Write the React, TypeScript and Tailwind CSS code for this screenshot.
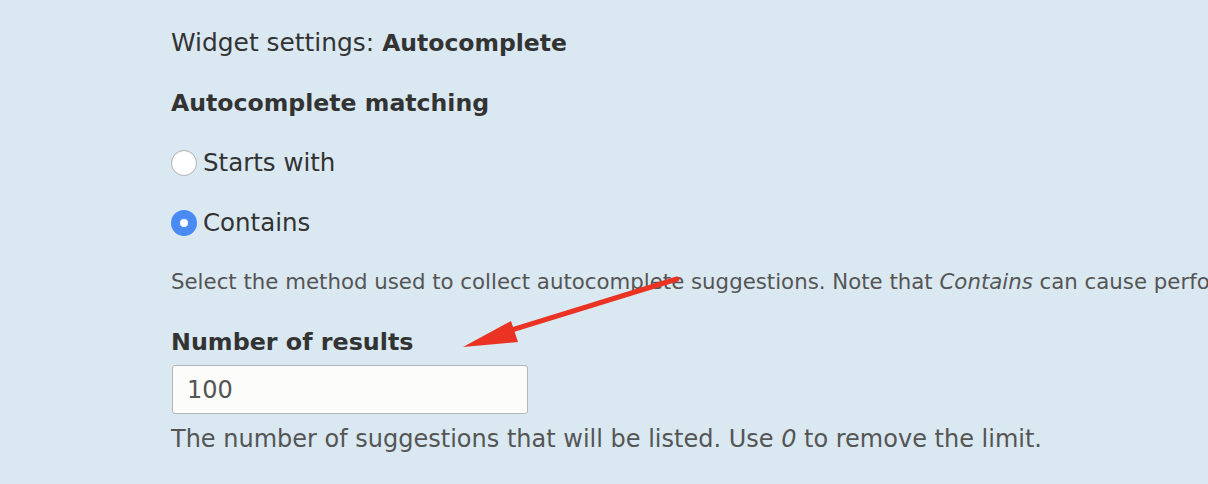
import React from "react";

export default function App() {
  return (
    <div
      className="relative w-[1208px] h-[484px] overflow-hidden bg-[#d9e8f1] text-[#333333]"
      style={{ fontFamily: '"DejaVu Sans", "Liberation Sans", sans-serif' }}
    >
      <div className="flex flex-col pl-[171px] pt-[13px] whitespace-nowrap">
        <div className="h-[60px] leading-[60px] text-[24.9px]">
          Widget settings: <span className="font-bold text-[23.5px]">Autocomplete</span>
        </div>
        <div className="h-[60px] leading-[60px] text-[23.6px] font-bold">Autocomplete matching</div>
        <div className="h-[60px] flex items-center gap-[6px]">
          <span className="w-[26px] h-[26px] rounded-full bg-white border border-[#b0b0b0] shrink-0" />
          <span className="text-[24.5px] leading-[60px]">Starts with</span>
        </div>
        <div className="h-[59px] flex items-center gap-[6px]">
          <span className="w-[26px] h-[26px] rounded-full bg-[#4a8af4] flex items-center justify-center shrink-0">
            <span className="w-[8px] h-[8px] rounded-full bg-white" />
          </span>
          <span className="text-[24.5px] leading-[59px]">Contains</span>
        </div>
        <div className="h-[59px] leading-[59px] text-[21.3px] text-[#555555]">
          Select the method used to collect autocomplete suggestions. Note that <em>Contains</em> can cause performance issues on sites with thousands of entities.
        </div>
        <div className="h-[40px] leading-[40px] text-[23.8px] font-bold mt-[11px]">Number of results</div>
        <div className="h-[49px] w-[356px] ml-[1px] mt-[3px] border border-[#b5b5b5] rounded-[3px] bg-[#fcfcfa] flex items-center px-[14px] text-[24px] text-[#555555]">
          100
        </div>
        <div className="h-[51px] leading-[51px] text-[24px] text-[#555555]">
          The number of suggestions that will be listed. Use <em>0</em> to remove the limit.
        </div>
      </div>
      <svg className="absolute inset-0 pointer-events-none" width="1208" height="484" viewBox="0 0 1208 484">
        <line x1="677" y1="279" x2="505" y2="332" stroke="#ea3323" strokeWidth="5" strokeLinecap="round" />
        <polygon points="463,347 511,321 518,342" fill="#ea3323" />
      </svg>
    </div>
  );
}
